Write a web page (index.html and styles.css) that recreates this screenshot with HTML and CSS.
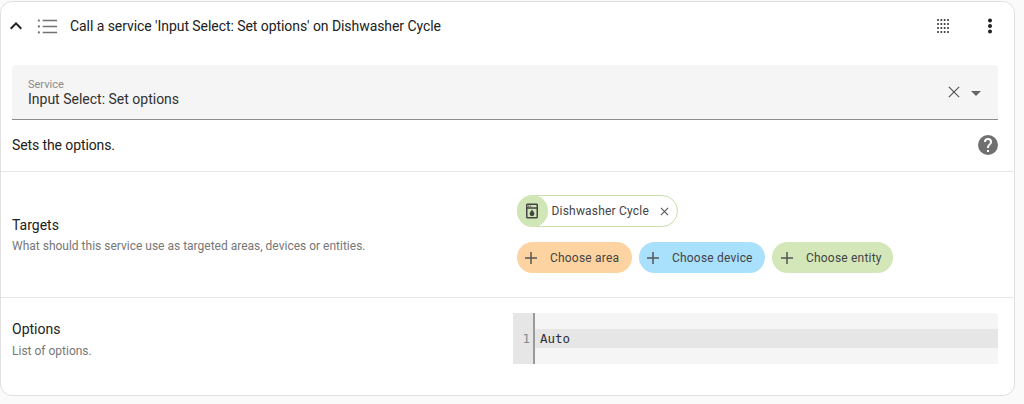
FILE: index.html
```html
<!DOCTYPE html>
<html lang="en">
<head>
<meta charset="utf-8">
<title>Call a service</title>
<link rel="stylesheet" href="styles.css">
</head>
<body>
<div class="card">
  <header class="head">
    <svg class="chev" viewBox="0 0 24 24"><path d="M7.41 15.41 12 10.83l4.59 4.58L18 14l-6-6-6 6z"/></svg>
    <svg class="list" viewBox="0 0 24 24"><path d="M7 5h15v1.6H7zM7 11.2h15v1.6H7zM7 17.4h15V19H7z"/><circle cx="3" cy="5.800" r="1.2"/><circle cx="3" cy="12" r="1.2"/><circle cx="3" cy="18.2" r="1.2"/></svg>
    <h1 class="title">Call a service 'Input Select: Set options' on Dishwasher Cycle</h1>
    <svg class="drag" viewBox="0 0 12 14"><circle cx="1" cy="1" r="1"/><circle cx="4.300" cy="1" r="1"/><circle cx="7.600" cy="1" r="1"/><circle cx="11" cy="1" r="1"/><circle cx="1" cy="5" r="1"/><circle cx="4.300" cy="5" r="1"/><circle cx="7.600" cy="5" r="1"/><circle cx="11" cy="5" r="1"/><circle cx="1" cy="9" r="1"/><circle cx="4.300" cy="9" r="1"/><circle cx="7.600" cy="9" r="1"/><circle cx="11" cy="9" r="1"/><circle cx="1" cy="13" r="1"/><circle cx="4.300" cy="13" r="1"/><circle cx="7.600" cy="13" r="1"/><circle cx="11" cy="13" r="1"/></svg>
    <svg class="more" viewBox="0 0 6 16"><circle cx="3" cy="2.500" r="2"/><circle cx="3" cy="8" r="2"/><circle cx="3" cy="13.5" r="2"/></svg>
  </header>

  <div class="field">
    <div class="field-text">
      <span class="field-label">Service</span>
      <span class="field-value">Input Select: Set options</span>
    </div>
    <svg class="clear" viewBox="0 0 14 14"><path d="M1 1l12 12M13 1L1 13"/></svg>
    <span class="caret"></span>
  </div>

  <div class="desc">
    <span>Sets the options.</span>
    <svg class="help" viewBox="0 0 24 24"><path d="M12 2a10 10 0 1 0 0 20 10 10 0 0 0 0-20zm1 17h-2v-2h2zm2.070-7.750-.9.92C13.450 12.900 13 13.500 13 15h-2v-.5c0-1.100.45-2.100 1.170-2.830l1.240-1.260A2 2 0 1 0 10 9H8a4 4 0 1 1 8 0c0 .88-.36 1.680-.93 2.250z"/></svg>
  </div>

  <section class="row targets">
    <div class="row-text">
      <div class="row-title">Targets</div>
      <div class="row-sub">What should this service use as targeted areas, devices or entities.</div>
    </div>
    <div class="row-control">
      <div class="chips">
        <span class="chip-selected">
          <span class="chip-icon">
            <svg viewBox="0 0 24 24"><path d="M18 2.010 6 2a2 2 0 0 0-2 2v16a2 2 0 0 0 2 2h12a2 2 0 0 0 2-2V4a2 2 0 0 0-2-1.990zM18 20H6V9h12zM18 7H6V4h12z"/><circle cx="7.600" cy="5.500" r=".9"/><circle cx="10.200" cy="5.500" r=".9"/><path d="M12 10.400s-3.200 3.300-3.200 5.400a3.200 3.200 0 0 0 6.400 0c0-2.100-3.200-5.400-3.200-5.400z"/></svg>
          </span>
          <span class="chip-name">Dishwasher Cycle</span>
          <svg class="chip-x" viewBox="0 0 10 10"><path d="M1 1l8 8M9 1L1 9"/></svg>
        </span>
      </div>
      <div class="chips adds">
        <span class="add area"><svg viewBox="0 0 12 12"><path d="M6 0v12M0 6h12"/></svg><span>Choose area</span></span>
        <span class="add device"><svg viewBox="0 0 12 12"><path d="M6 0v12M0 6h12"/></svg><span>Choose device</span></span>
        <span class="add entity"><svg viewBox="0 0 12 12"><path d="M6 0v12M0 6h12"/></svg><span>Choose entity</span></span>
      </div>
    </div>
  </section>

  <section class="row options">
    <div class="row-text">
      <div class="row-title">Options</div>
      <div class="row-sub">List of options.</div>
    </div>
    <div class="editor">
      <div class="gutter"><span>1</span></div>
      <div class="code"><div class="line">Auto</div></div>
    </div>
  </section>
</div>
</body>
</html>
```
FILE: styles.css
```css
* { box-sizing: border-box; }
html, body { margin: 0; padding: 0; }
body {
  width: 1024px;
  height: 404px;
  overflow: hidden;
  background: #fafafa;
  font-family: Roboto, "Liberation Sans", sans-serif;
  color: #212121;
}
.card {
  width: 1015px;
  height: 395px;
  margin-top: 1px;
  background: #fff;
  border: 1px solid #e0e0e0;
  border-radius: 12px;
}
.head {
  display: flex;
  align-items: center;
  height: 48px;
  padding-left: 3px;
}
.chev { width: 24px; height: 24px; fill: #212121; flex: none; }
.list { width: 23px; height: 23px; fill: #727272; flex: none; margin-left: 8px; }
.title {
  flex: 1;
  margin: 0 0 0 11px;
  font-size: 14px;
  font-weight: 400;
  line-height: 20px;
  letter-spacing: -.06px;
  color: #212121;
}
.drag { width: 12px; height: 14px; fill: #333; flex: none; margin-right: 38px; }
.more { width: 6px; height: 16px; fill: #212121; flex: none; margin-right: 21px; }
.field {
  display: flex;
  align-items: center;
  width: 986px;
  height: 55px;
  margin: 15px 0 0 11px;
  padding: 0 16px;
  background: #f5f5f5;
  border-bottom: 1px solid #8c8c8c;
  border-radius: 4px 4px 0 0;
}
.field-text { flex: 1; display: flex; flex-direction: column; padding-top: 1px; }
.field-label { font-size: 11px; line-height: 13px; color: #8a8a8a; }
.field-value { font-size: 14px; line-height: 18px; margin-top: -1px; color: #303030; }
.clear { width: 12px; height: 12px; stroke: #555; stroke-width: 1.4; fill: none; flex: none; margin: 0 11px 0 0; }
.caret {
  width: 0;
  height: 0;
  flex: none;
  margin: 2px 1px 0 0;
  border-left: 5px solid transparent;
  border-right: 5px solid transparent;
  border-top: 5px solid #666;
}
.desc {
  display: flex;
  align-items: center;
  justify-content: space-between;
  height: 52px;
  padding: 0 15px 2px 11px;
  font-size: 14px;
  letter-spacing: -.1px;
  color: #212121;
  border-bottom: 1px solid #e6e6e6;
}
.help { width: 24px; height: 24px; fill: #707070; flex: none; margin-right: -1px; }
.row { display: flex; border-bottom: 1px solid #e6e6e6; }
.row-text { width: 512px; padding-left: 11px; flex: none; }
.row-title { font-size: 14px; line-height: 20px; color: #212121; }
.row-sub { font-size: 12px; line-height: 16px; color: #777; margin-top: 3px; }
.targets { height: 126px; }
.targets .row-text { padding-top: 43px; }
.row-control { padding: 23px 0 0 4px; }
.chips { display: flex; gap: 7px; }
.adds { margin-top: 15px; }
.chip-selected {
  display: flex;
  align-items: center;
  width: 161px;
  height: 32px;
  background: #fff;
  border: 1.5px solid #c9e0ab;
  border-radius: 16px;
}
.chip-icon {
  display: flex;
  align-items: center;
  justify-content: center;
  width: 31px;
  height: 32px;
  margin-left: -1.5px;
  background: #d1e6b7;
  border-radius: 16px;
  flex: none;
}
.chip-icon svg { width: 18px; height: 18px; fill: #444; }
.chip-name { margin-left: 4px; font-size: 12px; letter-spacing: .2px; color: #444; white-space: nowrap; }
.chip-x { width: 9px; height: 9px; stroke: #555; stroke-width: 1.2; fill: none; margin-left: 11px; flex: none; }
.add {
  display: flex;
  align-items: center;
  height: 31px;
  border-radius: 15.5px;
  padding-left: 8px;
  font-size: 12px;
  letter-spacing: .2px;
  color: #444;
  white-space: nowrap;
}
.add svg { width: 12px; height: 12px; stroke: #555; stroke-width: 1.5; fill: none; flex: none; margin-right: 13px; }
.area { width: 115px; background: #fdd4a1; }
.device { width: 126px; background: #a9e0fc; }
.entity { width: 121px; background: #d3e7b9; padding-left: 9px; }
.options { border-bottom: 0; }
.options .row-text { padding-top: 21px; }
.options .row-sub { margin-top: 4px; }
.editor {
  display: flex;
  width: 485px;
  height: 51px;
  margin: 15px 0 0 0;
  background: #f5f5f5;
  border-radius: 0 4px 0 0;
  overflow: hidden;
}
.gutter {
  width: 22px;
  flex: none;
  background: #e6e6e6;
  border-right: 2px solid #9a9a9a;
  padding-top: 16px;
  padding-right: 3px;
  font: 12.5px/19px "DejaVu Sans Mono", monospace;
  color: #7d8a96;
  text-align: right;
}
.code { flex: 1; padding-top: 16px; }
.line {
  height: 19px;
  padding-left: 5px;
  background: #e6e6e6;
  font: 12.5px/19px "DejaVu Sans Mono", monospace;
  color: #2a2f3a;
}
```
